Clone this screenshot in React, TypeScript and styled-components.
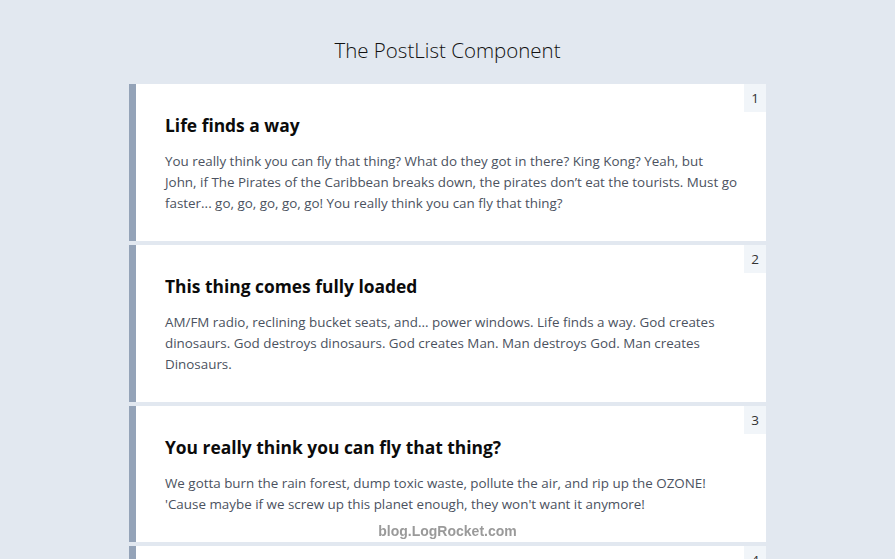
import React from "react";
import styled, { createGlobalStyle } from "styled-components";

const GlobalStyle = createGlobalStyle`
  html, body {
    margin: 0;
    padding: 0;
    background: #e2e8f0;
  }
  body {
    font-family: "Open Sans", "Noto Sans", sans-serif;
    color: #1a202c;
  }
`;

const Page = styled.main`
  display: flex;
  flex-direction: column;
  align-items: center;
  padding-top: 36px;
  min-height: 100vh;
  box-sizing: border-box;
`;

const Heading = styled.h1`
  margin: 0 0 20px;
  font-size: 20.5px;
  line-height: 28px;
  font-weight: 300;
  color: #111;
`;

const List = styled.ul`
  list-style: none;
  margin: 0;
  padding: 0;
  width: 637px;
  display: flex;
  flex-direction: column;
  gap: 4px;
`;

const Card = styled.li`
  position: relative;
  background: #ffffff;
  border-left: 7px solid #94a3b8;
  padding: 29px 29px 27.5px;
  box-sizing: border-box;
`;

const Badge = styled.span`
  position: absolute;
  top: 0;
  right: 0;
  width: 22px;
  height: 28px;
  background: #f1f5f9;
  display: flex;
  align-items: center;
  justify-content: center;
  font-size: 13.5px;
  color: #333;
`;

const Title = styled.h2`
  margin: 0 0 13.5px;
  font-size: 17.4px;
  line-height: 24px;
  font-weight: 700;
  color: #0b0b0b;
`;

const Body = styled.p`
  margin: 0;
  font-size: 13.4px;
  line-height: 21px;
  color: #4b5260;
`;

const Watermark = styled.div`
  position: fixed;
  left: 0;
  right: 0;
  bottom: 20px;
  text-align: center;
  font-family: "Liberation Sans", Arial, sans-serif;
  font-weight: 700;
  font-size: 14px;
  color: #9a9a9a;
  pointer-events: none;
`;

const posts = [
  {
    id: 1,
    title: "Life finds a way",
    body:
      "You really think you can fly that thing? What do they got in there? King Kong? Yeah, but John, if The Pirates of the Caribbean breaks down, the pirates don’t eat the tourists. Must go faster... go, go, go, go, go! You really think you can fly that thing?",
  },
  {
    id: 2,
    title: "This thing comes fully loaded",
    body:
      "AM/FM radio, reclining bucket seats, and... power windows. Life finds a way. God creates dinosaurs. God destroys dinosaurs. God creates Man. Man destroys God. Man creates Dinosaurs.",
  },
  {
    id: 3,
    title: "You really think you can fly that thing?",
    body:
      "We gotta burn the rain forest, dump toxic waste, pollute the air, and rip up the OZONE! 'Cause maybe if we screw up this planet enough, they won't want it anymore!",
  },
  {
    id: 4,
    title: "Hold on to your butts",
    body:
      "Checkmate... It's a UNIX system! I know this! Eventually you do plan to have dinosaurs on your dinosaur tour, right?",
  },
];

export default function App() {
  return (
    <>
      <GlobalStyle />
      <Page>
        <Heading>The PostList Component</Heading>
        <List>
          {posts.map((p) => (
            <Card key={p.id}>
              <Badge>{p.id}</Badge>
              <Title>{p.title}</Title>
              <Body>{p.body}</Body>
            </Card>
          ))}
        </List>
      </Page>
      <Watermark>blog.LogRocket.com</Watermark>
    </>
  );
}
